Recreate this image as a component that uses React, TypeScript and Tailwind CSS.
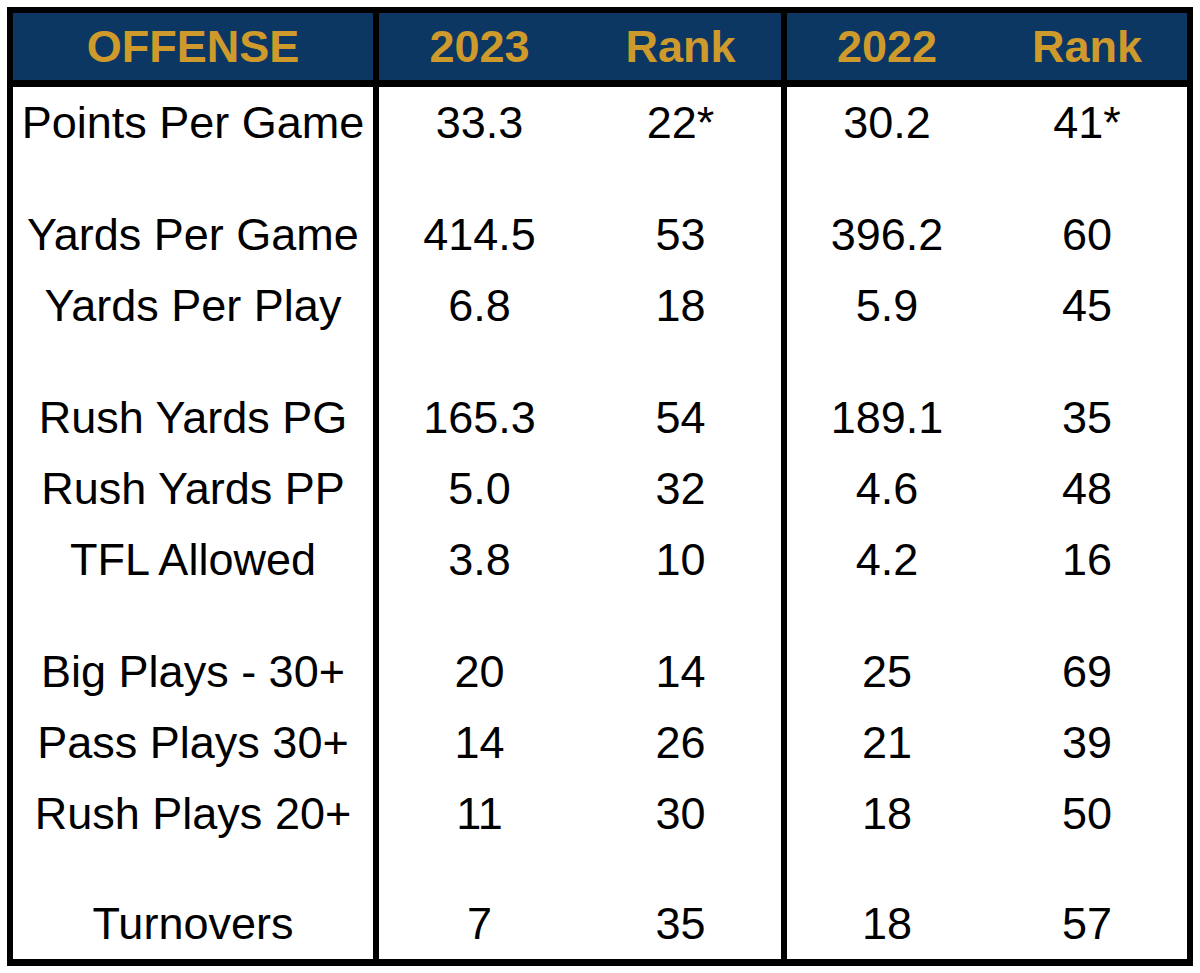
const ROWS: (string[] | number)[] = [
  ["Points Per Game", "33.3", "22*", "30.2", "41*"],
  41,
  ["Yards Per Game", "414.5", "53", "396.2", "60"],
  ["Yards Per Play", "6.8", "18", "5.9", "45"],
  41,
  ["Rush Yards PG", "165.3", "54", "189.1", "35"],
  ["Rush Yards PP", "5.0", "32", "4.6", "48"],
  ["TFL Allowed", "3.8", "10", "4.2", "16"],
  41,
  ["Big Plays - 30+", "20", "14", "25", "69"],
  ["Pass Plays 30+", "14", "26", "21", "39"],
  ["Rush Plays 20+", "11", "30", "18", "50"],
  39,
  ["Turnovers", "7", "35", "18", "57"],
];

function Row({ cells, height, head }: { cells: string[]; height: number; head?: boolean }) {
  const cell = head ? "font-bold text-[#cf9a2c]" : "text-black";
  return (
    <div className="flex text-center text-[45px]" style={{ height, lineHeight: `${height}px` }}>
      <div className={`w-[366px] border-r-[6px] border-black ${cell}`}>{cells[0]}</div>
      <div className="w-[408px] border-r-[6px] border-black flex">
        <div className={`flex-1 ${cell}`}>{cells[1]}</div>
        <div className={`flex-1 ${cell}`}>{cells[2]}</div>
      </div>
      <div className="flex-1 flex">
        <div className={`flex-1 ${cell}`}>{cells[3]}</div>
        <div className={`flex-1 ${cell}`}>{cells[4]}</div>
      </div>
    </div>
  );
}

export default function App() {
  return (
    <div className="min-h-screen bg-white p-[7px] font-['Liberation_Sans',Arial,sans-serif]">
      <div className="w-[1186px] border-[6px] border-b-[7px] border-black">
        <div className="bg-[#0c3763] border-b-[7px] border-black">
          <Row head height={67} cells={["OFFENSE", "2023", "Rank", "2022", "Rank"]} />
        </div>
        {ROWS.map((r, i) =>
          typeof r === "number" ? (
            <Row key={i} height={r} cells={["", "", "", "", ""]} />
          ) : (
            <Row key={i} height={71} cells={r} />
          )
        )}
      </div>
    </div>
  );
}
